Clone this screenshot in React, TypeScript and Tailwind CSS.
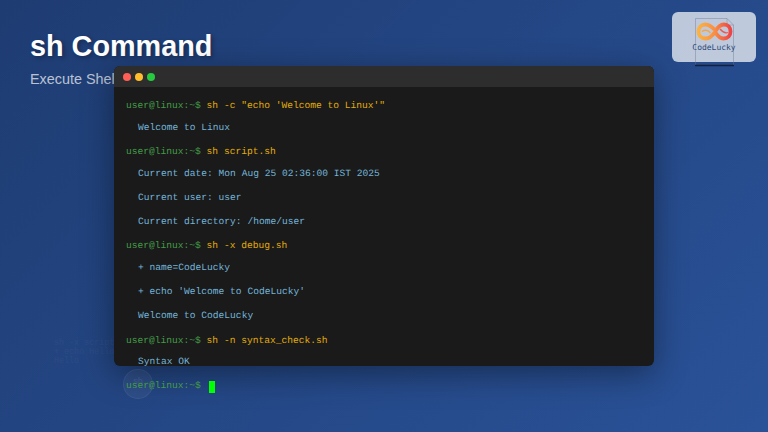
const mono = "font-['Liberation_Mono','Courier_New',monospace]";

type Line = { kind: 'cmd' | 'out'; text: string };

const lines: Line[] = [
  { kind: 'cmd', text: `sh -c "echo 'Welcome to Linux'"` },
  { kind: 'out', text: 'Welcome to Linux' },
  { kind: 'cmd', text: 'sh script.sh' },
  { kind: 'out', text: 'Current date: Mon Aug 25 02:36:00 IST 2025' },
  { kind: 'out', text: 'Current user: user' },
  { kind: 'out', text: 'Current directory: /home/user' },
  { kind: 'cmd', text: 'sh -x debug.sh' },
  { kind: 'out', text: '+ name=CodeLucky' },
  { kind: 'out', text: "+ echo 'Welcome to CodeLucky'" },
  { kind: 'out', text: 'Welcome to CodeLucky' },
  { kind: 'cmd', text: 'sh -n syntax_check.sh' },
  { kind: 'out', text: 'Syntax OK' },
];

function Logo() {
  return (
    <div className="relative flex h-[50px] w-[84px] flex-col items-center rounded-[6px] bg-white/70 pt-[10px]">
      {/* page outline behind the mark */}
      <svg className="absolute left-[22px] top-[5px]" width="41" height="50" viewBox="0 0 41 50" fill="none">
        <path d="M1.500 1.500H33L39.500 8V48.500H1.500Z" stroke="#6b7488" strokeOpacity="0.4" />
        <path d="M33 1.500V8H39.500" stroke="#6b7488" strokeOpacity="0.35" />
        <path d="M1 48.500H40" stroke="#14213d" strokeWidth="1.500" />
      </svg>
      <svg className="relative" width="37" height="19" viewBox="0 0 37 19" fill="none">
        <defs>
          <linearGradient id="inf" x1="0" y1="0" x2="1" y2="0">
            <stop offset="0" stopColor="#fbb23e" />
            <stop offset="0.5" stopColor="#f98f45" />
            <stop offset="1" stopColor="#ee4444" />
          </linearGradient>
        </defs>
        <path
          d="M19 8C15 4 13 2.500 9.500 2.500C5 2.500 2.500 5.500 2.500 9.500C2.500 13.500 5 16.500 9.500 16.500C14 16.500 17 13 19 10C21 6 24 2.500 28 2.500C32 2.500 34.500 5.500 34.500 9.500C34.500 13.500 32 16.500 27.500 16.500C24 16.500 21.500 14 19 10"
          stroke="url(#inf)"
          strokeWidth="3.800"
        />
        <path d="M6 9.500C9 7.500 12 8 14.500 11" stroke="#f9a43f" strokeWidth="1.300" />
        <path d="M24 7C26.500 10 29 11.500 32 10.500" stroke="#f0564a" strokeWidth="1.300" />
      </svg>
      <div className="relative mt-px font-['DejaVu_Sans_Mono',monospace] text-[8px] leading-[12px] text-[#2f4a78] [text-rendering:geometricPrecision]">
        CodeLucky
      </div>
    </div>
  );
}

export default function App() {
  return (
    <div className="relative h-[432px] w-[768px] overflow-hidden bg-[linear-gradient(135deg,#1e3c72,#2a5298)] font-['Liberation_Sans',Arial,sans-serif]">
      {/* faint code blocks in the background */}
      <div className={`absolute left-[48px] top-[333px] h-[38px] w-[70px] rounded-[3px] bg-white/[0.005] px-[6px] py-[6px] text-[8.400px] leading-[9px] text-white/[0.035] ${mono}`}>
        <div className="whitespace-pre">sh -x script</div>
        <div className="whitespace-pre">+ echo Hello</div>
        <div className="whitespace-pre">Hello</div>
      </div>
      <div className={`absolute left-[600px] top-[345px] h-[38px] w-[108px] rounded-[3px] bg-white/[0.005] px-[6px] py-[5px] text-[8.400px] leading-[18px] text-white/[0.025] ${mono}`}>
        <div className="whitespace-pre">echo "Done: done</div>
        <div className="whitespace-pre">exit 0 script</div>
      </div>
      <div className={`absolute left-[610px] top-[53px] text-[8.400px] leading-[10px] text-white/[0.025] ${mono}`}>
        <div className="whitespace-pre">#!/bin/sh   echo</div>
        <div className="whitespace-pre">     echo "Hello"</div>
      </div>
      <div className="absolute left-[123px] top-[369px] flex h-[30px] w-[30px] items-center justify-center rounded-full border border-white/[0.06] bg-white/[0.05] pb-[4px] text-[9px] text-white/[0.1]">
        sh
      </div>

      <header className="relative flex items-start justify-between pl-[30px] pr-[12px] pt-[12px]">
        <div className="pt-[18px]">
          <h1 className="text-[28.800px] font-bold leading-[33px] text-white [text-shadow:2px_2px_4px_rgba(0,0,0,0.3)]">sh Command</h1>
          <p className="mt-[8px] text-[14.400px] leading-[17px] text-white/70">Execute Shell Commands</p>
        </div>
        <Logo />
      </header>

      {/* terminal sits on top of the header and hides the end of the subtitle */}
      <div className="absolute inset-0 flex items-center justify-center">
        <div className="h-[300px] w-[540px] rounded-[6px] bg-[#1a1a1a] shadow-[0_8px_32px_rgba(0,0,0,0.4)]">
          <div className="flex h-[21px] items-center gap-[4px] rounded-t-[6px] bg-[#2d2d2d] px-[9px]">
            <span className="h-[8px] w-[8px] rounded-full bg-[#ff5f56]" />
            <span className="h-[8px] w-[8px] rounded-full bg-[#ffbd2e]" />
            <span className="h-[8px] w-[8px] rounded-full bg-[#27c93f]" />
          </div>
          <div className={`px-[12px] pt-[12px] text-[9.600px] leading-[14.400px] [text-rendering:geometricPrecision] ${mono}`}>
            {lines.map((l, i) =>
              l.kind === 'cmd' ? (
                <div key={i} className="mb-[7.300px] whitespace-pre">
                  <span className="text-[#439a47]">user@linux:~$ </span>
                  <span className="text-[#e0ac0a]">{l.text}</span>
                </div>
              ) : (
                <div key={i} className="mb-[9.800px] whitespace-pre pl-[12px] text-[#74b4d8]">{l.text}</div>
              ),
            )}
            <div className="flex items-center whitespace-pre">
              <span className="text-[#439a47]">user@linux:~$ </span>
              <span className="ml-[2px] h-[12px] w-[6px] bg-[#00ff00]" />
            </div>
          </div>
        </div>
      </div>
    </div>
  );
}
